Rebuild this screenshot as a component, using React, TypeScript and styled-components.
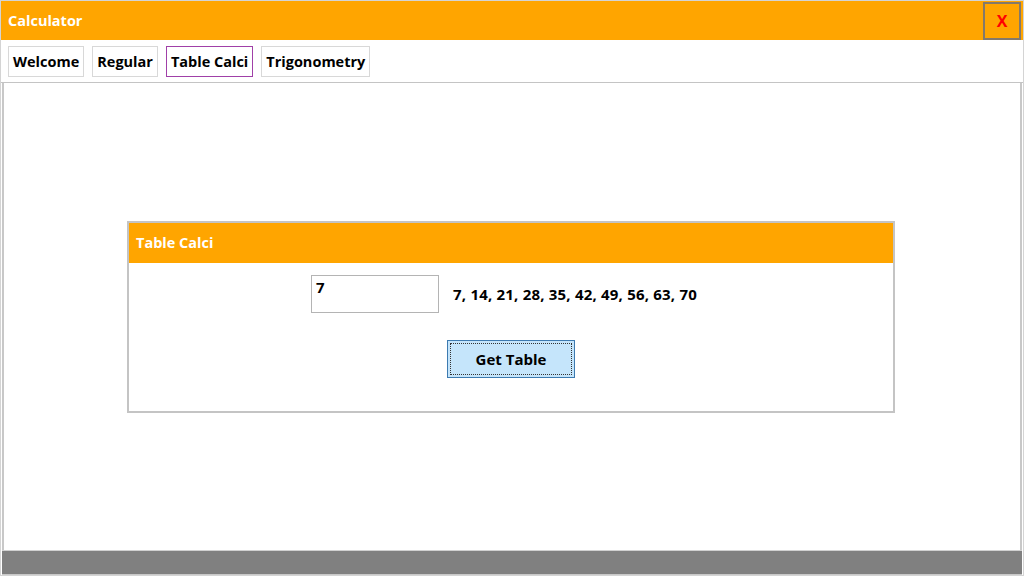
import styled, { createGlobalStyle } from "styled-components";

const orange = "#ffa500";
const font = `"Open Sans", "Noto Sans", "Liberation Sans", sans-serif`;

const GlobalStyle = createGlobalStyle`
  html, body {
    margin: 0;
    padding: 0;
    background: #ffffff;
  }
  * {
    box-sizing: border-box;
  }
`;

const Window = styled.div`
  width: 1024px;
  height: 576px;
  display: flex;
  flex-direction: column;
  border: 1px solid #d4d4d4;
  font-family: ${font};
  background: #ffffff;
`;

const TitleBar = styled.header`
  height: 39px;
  background: ${orange};
  display: flex;
  align-items: center;
  justify-content: space-between;
  padding: 0 2px 0 7px;
`;

const Title = styled.span`
  color: #ffffff;
  font-weight: 700;
  font-size: 14.5px;
`;

const CloseButton = styled.button`
  width: 38px;
  height: 38px;
  border: 2px solid #84796a;
  background: ${orange};
  color: #ff0000;
  font-family: ${font};
  font-weight: 700;
  font-size: 16px;
  padding: 0;
  display: flex;
  align-items: center;
  justify-content: center;
`;

const TabStrip = styled.nav`
  height: 43px;
  display: flex;
  align-items: center;
  gap: 8px;
  padding: 1px 7px 0;
  border-bottom: 1px solid #c4c4c4;
`;

const Tab = styled.button<{ $active?: boolean }>`
  height: 31px;
  padding: 0 4px;
  background: #ffffff;
  border: 1px solid ${(p) => (p.$active ? "#a040a8" : "#d8d8d8")};
  font-family: ${font};
  font-weight: 700;
  font-size: 14.5px;
  color: #000000;
`;

const Content = styled.main`
  flex: 1;
  margin: 0 1px;
  border-left: 2px solid #c8c8c8;
  border-right: 2px solid #c8c8c8;
  display: flex;
  align-items: center;
  justify-content: center;
`;

const Panel = styled.section`
  width: 768px;
  height: 192px;
  border: 2px solid #c4c4c4;
  display: flex;
  flex-direction: column;
  margin-right: 2px;
`;

const PanelHeader = styled.div`
  height: 40px;
  background: ${orange};
  display: flex;
  align-items: center;
  padding-left: 7px;
  color: #ffffff;
  font-weight: 700;
  font-size: 14.5px;
`;

const PanelBody = styled.div`
  flex: 1;
  display: flex;
  flex-direction: column;
  align-items: center;
  padding-top: 12px;
  gap: 27px;
`;

const InputRow = styled.div`
  display: flex;
  align-items: center;
  gap: 14px;
  padding-right: 14px;
`;

const NumberBox = styled.div`
  width: 128px;
  height: 38px;
  border: 1px solid #b4b4b4;
  padding: 1px 4px;
  font-weight: 700;
  font-size: 15px;
  color: #000000;
`;

const Result = styled.span`
  font-weight: 700;
  font-size: 15px;
  letter-spacing: 0.2px;
  color: #000000;
`;

const ActionButton = styled.button`
  width: 128px;
  height: 38px;
  background: #c5e5fb;
  border: 1px solid #3d7ab0;
  padding: 2px;
  font-family: ${font};
  font-weight: 700;
  font-size: 15px;
  color: #000000;
`;

const FocusRing = styled.span`
  display: flex;
  align-items: center;
  justify-content: center;
  width: 100%;
  height: 100%;
  border: 1px dotted #333333;
`;

const StatusBar = styled.footer`
  height: 25px;
  margin: 0 1px;
  background: #808080;
  border-top: 1px solid #d0d0d0;
  border-bottom: 1px solid #c8c8c8;
`;

export default function App() {
  const n = 7;
  const table = Array.from({ length: 10 }, (_, i) => n * (i + 1)).join(", ");
  return (
    <>
      <GlobalStyle />
      <Window>
        <TitleBar>
          <Title>Calculator</Title>
          <CloseButton>X</CloseButton>
        </TitleBar>
        <TabStrip>
          <Tab>Welcome</Tab>
          <Tab>Regular</Tab>
          <Tab $active>Table Calci</Tab>
          <Tab>Trigonometry</Tab>
        </TabStrip>
        <Content>
          <Panel>
            <PanelHeader>Table Calci</PanelHeader>
            <PanelBody>
              <InputRow>
                <NumberBox>{n}</NumberBox>
                <Result>{table}</Result>
              </InputRow>
              <ActionButton>
                <FocusRing>Get Table</FocusRing>
              </ActionButton>
            </PanelBody>
          </Panel>
        </Content>
        <StatusBar />
      </Window>
    </>
  );
}
